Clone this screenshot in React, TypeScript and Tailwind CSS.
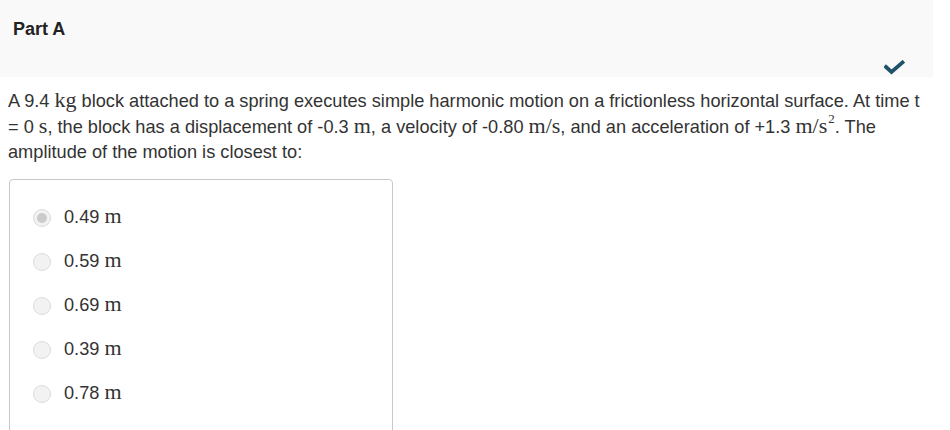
import React from "react";

const M = ({ children }: { children: React.ReactNode }) => (
  <span className="text-[22px] leading-none" style={{ fontFamily: '"Liberation Serif", serif' }}>
    {children}
  </span>
);

const options = ["0.49", "0.59", "0.69", "0.39", "0.78"];

export default function App() {
  return (
    <div className="w-[950px] h-[430px] overflow-hidden bg-white text-[#333]" style={{ fontFamily: '"Liberation Sans", Arial, sans-serif' }}>
      <div className="w-[933px] h-[77px] bg-[#f9f9f9] relative">
        <div className="pl-[13px] pt-[18px] text-[18px] font-bold text-[#222] leading-[22px]">Part A</div>
        <svg className="absolute left-[884px] top-[60px]" width="21" height="15" viewBox="0 0 21 15">
          <path d="M2 7 L7.5 12 L18.5 2.5" fill="none" stroke="#1e5269" strokeWidth="3.8" strokeLinecap="square" strokeLinejoin="miter" />
        </svg>
      </div>
      <div className="w-[933px] pl-[8px] pr-[8px] pt-[12px] text-[18.2px] leading-[25.5px]">
        A 9.4 <M>kg</M> block attached to a spring executes simple harmonic motion on a frictionless horizontal surface. At time t = 0 <M>s</M>, the block has a displacement of -0.3 <M>m</M>, a velocity of -0.80 <M>m/s</M>, and an acceleration of +1.3{" "}
        <M>
          m/s<sup className="text-[13px] relative top-[-10px] ml-[1px]">2</sup>
        </M>
        . The amplitude of the motion is closest to:
      </div>
      <div className="ml-[9px] mt-[13px] w-[384px] h-[320px] border border-[#c8c8c8] rounded-[4px] pt-[16px]">
        {options.map((o, i) => (
          <div key={o} className="h-[44px] flex items-center pl-[23px]">
            <span className="w-[18px] h-[18px] rounded-full border border-[#dcdcdc] bg-[#f2f2f2] flex items-center justify-center">
              {i === 0 && <span className="w-[10px] h-[10px] rounded-full bg-[#cbcbcb]" />}
            </span>
            <span className="ml-[13px] text-[18.2px]">
              {o} <M>m</M>
            </span>
          </div>
        ))}
      </div>
    </div>
  );
}
